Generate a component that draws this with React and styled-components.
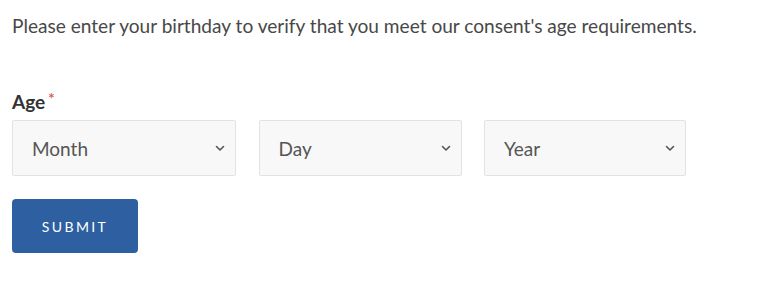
import React from "react";
import styled, { createGlobalStyle } from "styled-components";

const Global = createGlobalStyle`
  html, body { margin: 0; padding: 0; background: #fff; }
  body { font-family: Lato, "Open Sans", sans-serif; }
`;

const Page = styled.div`
  padding: 12px 12px 0 12px;
  display: flex;
  flex-direction: column;
`;

const Intro = styled.p`
  margin: 0;
  font-size: 19.1px;
  line-height: 28px;
  color: #484848;
`;

const Label = styled.div`
  margin-top: 50px;
  font-size: 19px;
  font-weight: 700;
  color: #333;
  line-height: 24px;
  display: flex;
  align-items: flex-start;
`;

const Req = styled.span`
  color: #e05a5a;
  font-size: 15px;
  margin-left: 3px;
  line-height: 16px;
`;

const Row = styled.div`
  display: flex;
  gap: 22.5px;
  margin-top: 6px;
`;

const Select = styled.div`
  box-sizing: border-box;
  width: ${(p) => p.$w}px;
  height: 56px;
  background: #f8f8f8;
  border: 1px solid #e2e2e2;
  border-radius: 2px;
  display: flex;
  align-items: center;
  justify-content: space-between;
  padding: 0 10px 0 19px;
  font-size: 19px;
  color: #555;
`;

const Chevron = () => (
  <svg width="10" height="7" viewBox="0 0 10 7">
    <path d="M1.5 1.5 L5 5 L8.5 1.5" fill="none" stroke="#555" strokeWidth="1.6" strokeLinecap="round" strokeLinejoin="round" />
  </svg>
);

const Button = styled.button`
  margin-top: 23px;
  width: 126px;
  height: 54px;
  background: #2e5fa0;
  border: none;
  border-radius: 4px;
  color: #fff;
  font-family: Lato, sans-serif;
  font-size: 14px;
  letter-spacing: 2.4px;
  padding: 0;
  align-self: flex-start;
`;

export default function App() {
  return (
    <>
      <Global />
      <Page>
        <Intro>Please enter your birthday to verify that you meet our consent's age requirements.</Intro>
        <Label>
          Age<Req>*</Req>
        </Label>
        <Row>
          <Select $w={224}>Month<Chevron /></Select>
          <Select $w={203}>Day<Chevron /></Select>
          <Select $w={202}>Year<Chevron /></Select>
        </Row>
        <Button>SUBMIT</Button>
      </Page>
    </>
  );
}
